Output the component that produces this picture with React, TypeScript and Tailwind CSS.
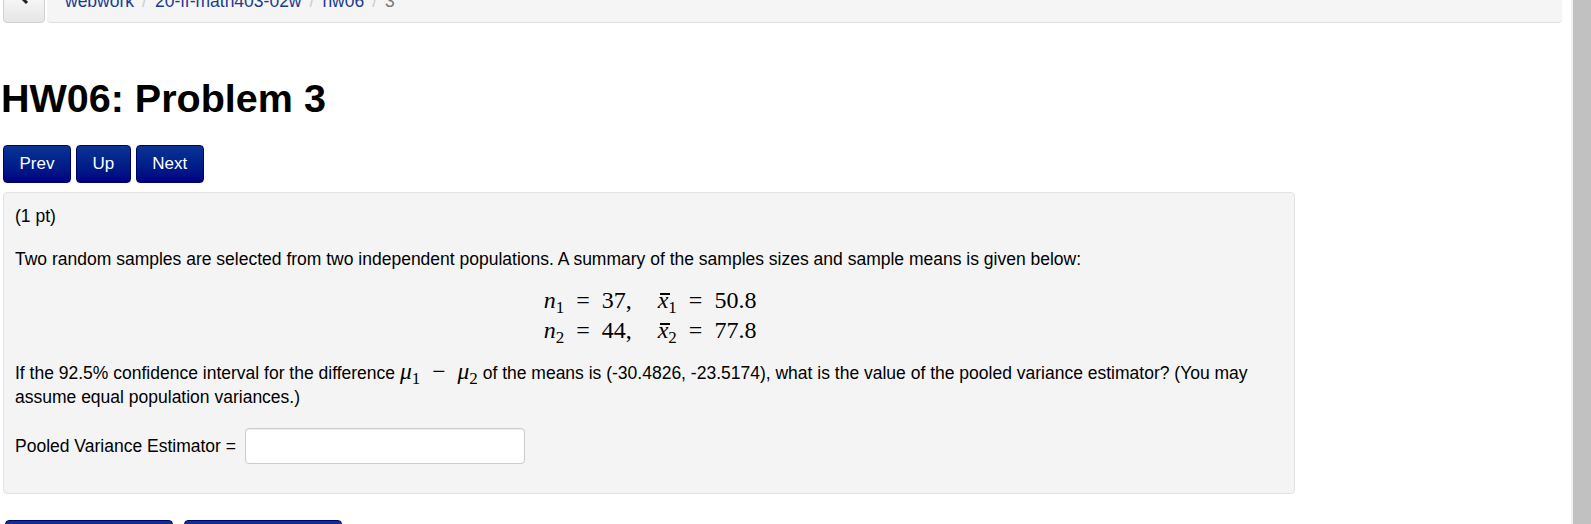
import React from "react";

function Sub({ children }: { children: React.ReactNode }) {
  return <span className="inline-block translate-y-[5px] text-[17px] leading-none">{children}</span>;
}

function MathRow({ n, nv, xv }: { n: string; nv: string; xv: string }) {
  return (
    <div className="flex h-[30px] items-baseline leading-[30px]">
      <span className="italic">n</span>
      <Sub>{n}</Sub>
      <span className="ml-[12px]">=</span>
      <span className="ml-[12px]">{nv},</span>
      <span className="relative ml-[26px] italic">
        x
        <span className="absolute left-[2px] top-[8px] h-[1.5px] w-[10px] bg-black" />
      </span>
      <Sub>{n}</Sub>
      <span className="ml-[12px]">=</span>
      <span className="ml-[12px]">{xv}</span>
    </div>
  );
}

function NavButton({ label }: { label: string }) {
  return (
    <button className="h-[38px] rounded-[4px] border border-[#00006a] bg-gradient-to-b from-[#0d3394] to-[#000080] px-[15.5px] text-[17px] text-white">
      {label}
    </button>
  );
}

export default function App() {
  return (
    <div className="flex h-[524px] overflow-hidden bg-white font-['Liberation_Sans',Arial,sans-serif] text-black">
      <div className="min-w-0 flex-1 pl-[3px] pr-[9px]">
        {/* breadcrumb, scrolled mostly out of view */}
        <div className="-mt-[15px] flex h-[38px] gap-[2px]">
          <button className="flex w-[42px] items-center justify-center rounded-[4px] border border-[#d0d0d0] bg-gradient-to-b from-white to-[#e6e6e6]">
            <svg width="14" height="16" viewBox="0 0 14 16" className="-translate-y-[8px]">
              <path d="M10 1 L3 8 L10 15" fill="none" stroke="#222" strokeWidth="3" />
            </svg>
          </button>
          <div className="flex flex-1 items-center rounded-[4px] border-b border-[#e0e0e0] bg-[#f5f5f5] pb-[5px] pl-[18px] text-[17.5px]">
            <span className="text-[#1c3d8c]">webwork</span>
            <span className="px-[8px] text-[#ccc]">/</span>
            <span className="text-[#1c3d8c]">20-ff-math403-02w</span>
            <span className="px-[8px] text-[#ccc]">/</span>
            <span className="text-[#1c3d8c]">hw06</span>
            <span className="px-[8px] text-[#ccc]">/</span>
            <span className="text-[#777]">3</span>
          </div>
        </div>

        <h1 className="-ml-[2px] mt-[53px] text-[39.5px] font-bold leading-[44px]">HW06: Problem 3</h1>

        <div className="mt-[25px] flex gap-[5px]">
          <NavButton label="Prev" />
          <NavButton label="Up" />
          <NavButton label="Next" />
        </div>

        <div className="mt-[9px] w-[1292px] rounded-[4px] border border-[#e3e3e3] bg-[#f4f4f4] px-[11px] pb-[29px] pt-[11px] text-[17.5px] leading-[24px]">
          <p>(1 pt)</p>
          <p className="mt-[19px]">
            Two random samples are selected from two independent populations. A summary of the samples sizes and
            sample means is given below:
          </p>
          <div className="mt-[14px] flex flex-col items-center pl-[2px] font-['Liberation_Serif',serif] text-[24px]">
            <MathRow n="1" nv="37" xv="50.8" />
            <MathRow n="2" nv="44" xv="77.8" />
          </div>
          <p className="mt-[15px]">
            If the 92.5% confidence interval for the difference{" "}
            <span className="font-['Liberation_Serif',serif] text-[23.5px] leading-none">
              <span className="italic">μ</span>
              <Sub>1</Sub>
              <span className="mx-[12px]">−</span>
              <span className="italic">μ</span>
              <Sub>2</Sub>
            </span>{" "}
            of the means is (-30.4826, -23.5174), what is the value of the pooled variance estimator? (You may assume
            equal population variances.)
          </p>
          <div className="mt-[19px] flex h-[36px] items-center">
            <span>Pooled Variance Estimator =</span>
            <input
              type="text"
              className="ml-[9px] h-[36px] w-[280px] rounded-[4px] border border-[#cccccc] bg-white shadow-[inset_0_1px_1px_rgba(0,0,0,0.075)]"
            />
          </div>
        </div>

        <div className="ml-[2px] mt-[26px] flex gap-[11px]">
          <button className="h-[38px] w-[168px] rounded-[4px] border border-[#00006a] bg-gradient-to-b from-[#0d3394] to-[#000080] text-[17px] text-white">
            Preview Answers
          </button>
          <button className="h-[38px] w-[158px] rounded-[4px] border border-[#00006a] bg-gradient-to-b from-[#0d3394] to-[#000080] text-[17px] text-white">
            Check Answers
          </button>
        </div>
      </div>

      {/* page scrollbar */}
      <div className="w-[20px] bg-[#f1f1f1] pl-[2px]">
        <div className="h-full bg-[#c1c1c1]" />
      </div>
    </div>
  );
}
